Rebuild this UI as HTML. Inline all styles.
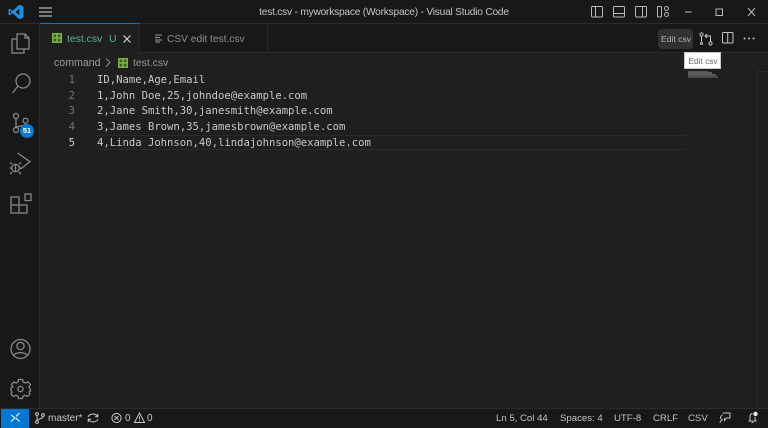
<!DOCTYPE html>
<html><head><meta charset="utf-8"><style>
*{box-sizing:border-box}
html,body{margin:0;padding:0;width:768px;height:428px;overflow:hidden;background:#1f1f1f}
body{position:relative;font-family:"Liberation Sans",sans-serif;color:#ccc}
.a{position:absolute}
.t{position:absolute;white-space:nowrap;line-height:14px}
.s{font-size:9.6px;top:412px;color:#c4c4c4}
.code{position:absolute;left:97px;font:10.58px/16px "DejaVu Sans Mono",monospace;color:#c8c8c8;white-space:pre}
.ln{position:absolute;left:50px;width:25px;text-align:right;font:10.58px/16px "DejaVu Sans Mono",monospace;color:#6e7681}
svg{position:absolute;overflow:visible}
</style></head><body>
<div class="a" style="left:0;top:0;width:768px;height:24px;background:#181818"></div>
<div class="a" style="left:0;top:24px;width:40px;height:384px;background:#181818;border-right:1px solid #2b2b2b"></div>
<div class="a" style="left:40px;top:24px;width:728px;height:29px;background:#181818"></div>
<div class="a" style="left:0;top:23px;width:768px;height:1px;background:#2b2b2b"></div>
<div class="a" style="left:40px;top:52px;width:728px;height:1px;background:#2b2b2b"></div>

<svg style="left:8px;top:4px" width="16" height="16" viewBox="0 0 16 16"><path d="M11.3 .8L15.5 2.6V13.4L11.3 15.2L4.6 9.2L1.8 11.4L.5 10.6V5.4L1.8 4.6L4.6 6.8ZM11.3 4.8L7.6 8L11.3 11.2ZM1.9 6.3V9.7L3.6 8Z" fill="#1e8fe0" fill-rule="evenodd"/></svg>
<svg style="left:38px;top:6px" width="15" height="12"><path d="M1 2H14M1 6H14M1 10H14" stroke="#b5b5b5" stroke-width="1.2"/></svg>
<div class="t" style="left:0;width:768px;text-align:center;top:6px;font-size:10.2px;letter-spacing:-.22px;color:#c4c4c4">test.csv - myworkspace (Workspace) - Visual Studio Code</div>

<svg style="left:590px;top:5px" width="180" height="14" fill="none" stroke="#b8b8b8" stroke-width="1">
<rect x="1.5" y="1.5" width="11" height="10.5" rx="1"/><path d="M5.5 1.5V12"/>
<rect x="23.5" y="1.5" width="11" height="10.5" rx="1"/><path d="M23.5 8.5H34.5"/>
<rect x="45.5" y="1.5" width="11" height="10.5" rx="1"/><path d="M52.5 1.5V12"/>
<rect x="67.5" y="1.5" width="4" height="10.5" rx="1"/><circle cx="76.5" cy="3.5" r="2"/><circle cx="76.5" cy="9.5" r="2"/>
<path d="M95 7H101.5"/><rect x="126" y="4" width="6.5" height="6.5"/><path d="M158 3L165 11M165 3L158 11"/>
</svg>

<div class="a" style="left:40px;top:24px;width:100px;height:29px;background:#1f1f1f;border-right:1px solid #2b2b2b"></div>
<div class="a" style="left:40px;top:23px;width:100px;height:1px;background:#0078d4"></div>
<div class="a" style="left:140px;top:24px;width:128px;height:29px;border-right:1px solid #2b2b2b"></div>
<svg style="left:52px;top:33px" width="10" height="10"><rect width="10" height="10" fill="#7cb343"/><path d="M1.5 1.5H4.2V4.2H1.5ZM5.8 1.5H8.5V4.2H5.8ZM1.5 5.8H4.2V8.5H1.5ZM5.8 5.8H8.5V8.5H5.8Z" fill="#3f5a25"/></svg>
<div class="t" style="left:67px;top:33px;font-size:10.4px;color:#59b58f">test.csv</div>
<div class="t" style="left:109px;top:33px;font-size:10.4px;color:#59b58f">U</div>
<svg style="left:123px;top:35px" width="8" height="8"><path d="M.5 .5L7.5 7.5M7.5 .5L.5 7.5" stroke="#ddd" stroke-width="1.1"/></svg>
<svg style="left:154px;top:34px" width="9" height="9"><path d="M1 1H8M1 3.5H6M1 6H8M1 8H6" stroke="#9a9a9a" stroke-width="1"/></svg>
<div class="t" style="left:167px;top:33px;font-size:10.2px;color:#8d8d8d">CSV edit test.csv</div>

<div class="a" style="left:658px;top:29px;width:35px;height:20px;border-radius:4px;background:#313131"></div>
<div class="t" style="left:661px;top:32px;font-size:8.6px;color:#b5b5b5">Edit csv</div>
<svg style="left:699px;top:32px" width="14" height="14" fill="none" stroke="#c4c4c4" stroke-width="1"><circle cx="2.5" cy="2.5" r="1.6"/><circle cx="11.5" cy="11.5" r="1.6"/><circle cx="2.5" cy="11.5" r="1"/><path d="M2.5 4.2V9.8M11.5 9.8V4H6.5M8 2L6 4L8 6"/></svg>
<svg style="left:722px;top:32px" width="12" height="12" fill="none" stroke="#c4c4c4" stroke-width="1"><rect x=".5" y=".5" width="10.5" height="10.5" rx="1"/><path d="M5.7 .5V11"/></svg>
<svg style="left:743px;top:37px" width="12" height="3" fill="#c4c4c4"><circle cx="1.5" cy="1.5" r="1"/><circle cx="6" cy="1.5" r="1"/><circle cx="10.5" cy="1.5" r="1"/></svg>

<div class="t" style="left:54px;top:56px;font-size:10.6px;color:#9a9a9a">command</div>
<svg style="left:105px;top:58px" width="6" height="9"><path d="M1 .5L5 4.5L1 8.5" fill="none" stroke="#9a9a9a" stroke-width=".9"/></svg>
<svg style="left:118px;top:58px" width="10" height="10"><rect width="10" height="10" fill="#7cb343"/><path d="M1.5 1.5H4.2V4.2H1.5ZM5.8 1.5H8.5V4.2H5.8ZM1.5 5.8H4.2V8.5H1.5ZM5.8 5.8H8.5V8.5H5.8Z" fill="#3f5a25"/></svg>
<div class="t" style="left:133px;top:57px;font-size:10.4px;color:#9a9a9a">test.csv</div>

<div class="a" style="left:97px;top:135px;width:588px;height:15px;border-top:1px solid #2a2a2a;border-bottom:1px solid #2a2a2a"></div>
<div class="ln" style="top:72px">1</div><div class="code" style="top:72px">ID,Name,Age,Email</div>
<div class="ln" style="top:88px">2</div><div class="code" style="top:88px">1,John Doe,25,johndoe@example.com</div>
<div class="ln" style="top:103px">3</div><div class="code" style="top:103px">2,Jane Smith,30,janesmith@example.com</div>
<div class="ln" style="top:119px">4</div><div class="code" style="top:119px">3,James Brown,35,jamesbrown@example.com</div>
<div class="ln" style="top:135px;color:#ccc">5</div><div class="code" style="top:135px">4,Linda Johnson,40,lindajohnson@example.com</div>

<div class="a" style="left:688px;top:71px;width:20px;height:1px;background:#555"></div>
<div class="a" style="left:688px;top:72px;width:24px;height:2px;background:#5c5c5c"></div>
<div class="a" style="left:688px;top:74px;width:28px;height:2px;background:#585858"></div>
<div class="a" style="left:688px;top:76px;width:30px;height:1.5px;background:#484848"></div>
<div class="a" style="left:757px;top:71px;width:1px;height:337px;background:#2b2b2b"></div>
<div class="a" style="left:757px;top:71px;width:11px;height:1px;background:#2b2b2b"></div>

<div class="a" style="left:684px;top:52px;width:37px;height:17px;background:#fff;border:1px solid #c8c8c8"></div>
<div class="t" style="left:688.5px;top:54px;font-size:8.3px;color:#666">Edit csv</div>

<svg style="left:0;top:24px" width="40" height="384" fill="none" stroke="#8a8a8a" stroke-width="1.25">
<path d="M17 10H25L29 14V25H17ZM17 15H12V29H24V25M25 10V14H29"/>
<circle cx="23" cy="57" r="7"/><path d="M18 62L12.5 69"/>
<circle cx="16" cy="92" r="2.5"/><circle cx="25.5" cy="96.7" r="2.5"/><circle cx="16" cy="106" r="2.5"/><path d="M16 94.5V103.5M25.5 99.2C25 103 19 101 16.5 103.5"/>
<path d="M17.5 129L30 137.7L20.5 145"/><circle cx="15.5" cy="144" r="3.8"/><path d="M11 144H9.5M21 144H19.5M12 140L10 138.5M19 140L21 138.5M12 148L10 150M19 148L21 150M15.5 140V148"/>
<path d="M11 173H19V181H27V189H11ZM11 181H19V189"/><rect x="25" y="170" width="6" height="6.5"/>
<circle cx="20.5" cy="325" r="9.5"/><circle cx="20.5" cy="322" r="3.6"/><path d="M13.5 332C14.5 327.5 26.5 327.5 27.5 332"/>
<circle cx="20.5" cy="365" r="2.6"/><path d="M18.5 355.5H22.5L23.2 358L25.5 359L27.8 357.7L30.5 360.5L29 362.8L30 365L30.5 365.5V367L29 368L29.8 370L27.5 372.5L25 371.3L23 372.3L22.5 374.5H18.5L18 372.3L15.8 371.3L13.5 372.5L11 370L12 368L11 366.5V364L12.8 362.8L11.5 360.5L13.8 358L16 359L18 358Z"/>
</svg>
<div class="a" style="left:20px;top:124px;width:14px;height:14px;border-radius:50%;background:#0a78d4;color:#fff;font:bold 7.5px/14px 'Liberation Sans',sans-serif;text-align:center">51</div>

<div class="a" style="left:0;top:408px;width:768px;height:20px;background:#181818;border-top:1px solid #2b2b2b"></div>
<div class="a" style="left:1px;top:409px;width:28px;height:19px;background:#0078d4"></div>
<svg style="left:10px;top:412px" width="11" height="11" fill="none" stroke="#fff" stroke-width="1"><path d="M1 9.5L5 6L1 3M9.5 1L6 4.5M9.5 9.5L6 6"/></svg>
<svg style="left:35px;top:412px" width="10" height="12" fill="none" stroke="#c4c4c4" stroke-width="1"><circle cx="2" cy="2" r="1.4"/><circle cx="8" cy="3" r="1.4"/><circle cx="2" cy="10" r="1.4"/><path d="M2 3.5V8.5M8 4.5C8 7 3 6.5 2.5 8.5"/></svg>
<div class="t s" style="left:48px;font-size:10px">master*</div>
<svg style="left:87px;top:412px" width="12" height="12" fill="none" stroke="#c4c4c4" stroke-width="1"><path d="M1 5C2 2 8 .5 10.5 4.5M11 7C10 10 4 11.5 1.5 7.5M10.8 1.8V4.8H8M1.2 10.2V7.2H4"/></svg>
<svg style="left:111px;top:412px" width="12" height="12" fill="none" stroke="#c4c4c4" stroke-width="1"><circle cx="5.5" cy="6" r="4.6"/><path d="M3.5 4L7.5 8M7.5 4L3.5 8"/></svg>
<div class="t s" style="left:125px;font-size:10px">0</div>
<svg style="left:134px;top:412px" width="12" height="12" fill="none" stroke="#c4c4c4" stroke-width="1"><path d="M5.5 1L10.5 10.5H.5ZM5.5 4.5V7.5M5.5 8.5V9.5"/></svg>
<div class="t s" style="left:147px;font-size:10px">0</div>
<div class="t s" style="left:496px">Ln 5, Col 44</div>
<div class="t s" style="left:560px">Spaces: 4</div>
<div class="t s" style="left:614px">UTF-8</div>
<div class="t s" style="left:653px">CRLF</div>
<div class="t s" style="left:688px">CSV</div>
<svg style="left:719px;top:412px" width="12" height="12" fill="none" stroke="#c4c4c4" stroke-width="1"><path d="M3.5 1H11V6H7.5L5.5 8.5V6M3.5 3.5A2 2 0 1 0 3.5 7.5M1 11C1 9.5 2.5 8 3.5 8"/></svg>
<svg style="left:747px;top:411px" width="12" height="13"><path d="M5.5 2.5C3.5 2.5 3 4 3 6V8.5L2 10H9L8 8.5V6M4.5 11.5H6.5" fill="none" stroke="#c4c4c4"/><circle cx="8.5" cy="3" r="2.2" fill="#e8e8e8"/></svg>
</body></html>
